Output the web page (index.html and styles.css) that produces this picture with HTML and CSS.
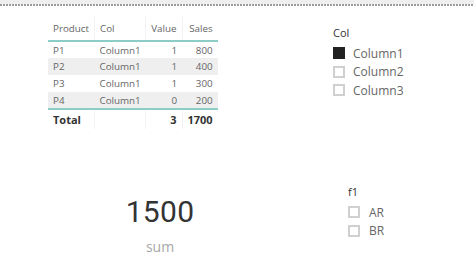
FILE: index.html
```html
<!DOCTYPE html>
<html>
<head>
<meta charset="utf-8">
<link rel="stylesheet" href="styles.css">
</head>
<body>
<div class="topbar"></div>
<div class="page">
  <div class="cell table-cell">
    <table class="tbl">
      <thead>
        <tr><th class="c1">Product</th><th class="c2">Col</th><th class="c3 num">Value</th><th class="c4 num">Sales</th></tr>
      </thead>
      <tbody>
        <tr><td>P1</td><td>Column1</td><td class="num">1</td><td class="num">800</td></tr>
        <tr class="alt"><td>P2</td><td>Column1</td><td class="num">1</td><td class="num">400</td></tr>
        <tr><td>P3</td><td>Column1</td><td class="num">1</td><td class="num">300</td></tr>
        <tr class="alt"><td>P4</td><td>Column1</td><td class="num">0</td><td class="num">200</td></tr>
      </tbody>
      <tfoot>
        <tr><td>Total</td><td></td><td class="num">3</td><td class="num">1700</td></tr>
      </tfoot>
    </table>
  </div>
  <div class="cell slicer-cell">
    <div class="slicer">
      <div class="slicer-title">Col</div>
      <div class="item"><span class="box checked"></span><span>Column1</span></div>
      <div class="item"><span class="box"></span><span>Column2</span></div>
      <div class="item"><span class="box"></span><span>Column3</span></div>
    </div>
  </div>
  <div class="cell card-cell">
    <div class="card">
      <div class="card-value">1500</div>
      <div class="card-label">sum</div>
    </div>
  </div>
  <div class="cell slicer2-cell">
    <div class="slicer">
      <div class="slicer-title">f1</div>
      <div class="item wide"><span class="box"></span><span>AR</span></div>
      <div class="item wide"><span class="box"></span><span>BR</span></div>
    </div>
  </div>
</div>
</body>
</html>
```
FILE: styles.css
```css
html, body {
  margin: 0;
  padding: 0;
  background: #fff;
  font-family: "Open Sans", "Noto Sans", sans-serif;
}
.topbar {
  height: 7px;
  background:
    repeating-linear-gradient(to right, #9a9a9a 0 2px, transparent 2px 3px) 0 4px / 100% 2px no-repeat,
    linear-gradient(#efefef, #efefef) 0 0 / 100% 4px no-repeat;
}
.page {
  display: grid;
  grid-template-columns: 300px 174px;
  grid-template-rows: 163px 101px;
}
.table-cell {
  padding: 9px 0 0 48px;
}
.tbl {
  border-collapse: collapse;
  font-size: 9.8px;
  color: #666;
  width: 169px;
}
.tbl th {
  font-weight: normal;
  height: 25px;
  padding: 0 5px;
  text-align: left;
  border-bottom: 2px solid #8ccdc7;
  border-right: 1px solid #f2f2f2;
  box-sizing: border-box;
}
.tbl th:last-child { border-right: none; }
.tbl .c1 { width: 47px; }
.tbl .c2 { width: 52px; }
.tbl .c3 { width: 34px; }
.tbl .c4 { width: 36px; }
.tbl td {
  height: 17px;
  padding: 0 5px;
  box-sizing: border-box;
  white-space: nowrap;
}
.tbl .num { text-align: right; }
.tbl tr.alt td { background: #efefef; }
.tbl tfoot td {
  height: 20px;
  border-top: 2px solid #8ccdc7;
  font-weight: bold;
  font-size: 11px;
  color: #333;
  border-right: 1px solid #f2f2f2;
}
.tbl tfoot td:last-child { border-right: none; }
.slicer-cell {
  padding: 19px 0 0 33px;
}
.slicer {
  font-size: 11px;
  color: #666;
}
.slicer-title {
  color: #333;
  height: 14px;
  line-height: 14px;
  margin-bottom: 4px;
}
.item {
  display: flex;
  align-items: center;
  gap: 8px;
  height: 18.5px;
  font-size: 12px;
}
.item.wide { gap: 9px; }
.box {
  width: 12px;
  height: 12px;
  box-sizing: border-box;
  border: 2px solid #d0d0d0;
  background: #fff;
  flex: none;
}
.box.checked {
  background: #222;
  border-color: #222;
}
.card-cell {
  padding: 24px 0 0 20px;
}
.card {
  text-align: center;
}
.card-value {
  font-family: Roboto, "DejaVu Sans", sans-serif;
  font-size: 30px;
  line-height: 36px;
  color: #333;
  letter-spacing: 0.3px;
}
.card-label {
  font-size: 14px;
  color: #a6a6a6;
  margin-top: 7px;
}
.slicer2-cell {
  padding: 15px 0 0 48px;
}
```
